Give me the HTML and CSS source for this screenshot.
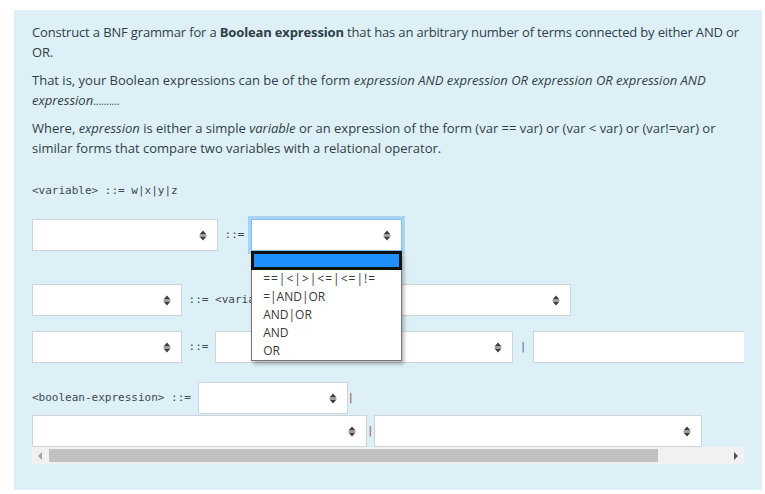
FILE: index.html
```html
<!DOCTYPE html>
<html>
<head>
<meta charset="utf-8">
<link rel="stylesheet" href="styles.css">
</head>
<body>
<div class="page">
  <div class="qtext">
    <p class="lead">Construct a BNF grammar for a <b>Boolean expression</b> that has an arbitrary number of terms connected by either AND or OR.</p>
    <p>That is, your Boolean expressions can be of the form <i>expression AND expression OR expression OR expression AND expression</i><span class="dots">..........</span></p>
    <p>Where, <i>expression</i> is either a simple <i>variable</i> or an expression of the form (var == var) or (var &lt; var) or (var!=var) or similar forms that compare two variables with a relational operator.</p>

    <div class="grammar">
      <div class="code codeline">&lt;variable&gt; ::= w|x|y|z</div>

      <div class="row r1">
        <span class="sel w186"><select></select><svg class="caret" viewBox="0 0 8 11"><path d="M0.5 4.5L4 0.5L7.5 4.5Z"/><path class="mid" d="M0.5 5.5H7.5"/><path d="M0.5 6.5L4 10.5L7.5 6.5Z"/></svg></span>
        <span class="code"> ::= </span>
        <span class="sel w151 focus"><select></select><svg class="caret" viewBox="0 0 8 11"><path d="M0.5 4.5L4 0.5L7.5 4.5Z"/><path class="mid" d="M0.5 5.5H7.5"/><path d="M0.5 6.5L4 10.5L7.5 6.5Z"/></svg>
          <div class="dropdown">
            <div class="opt selected"></div>
            <div class="opt sym">==|&lt;|&gt;|&lt;=|&lt;=|!=</div>
            <div class="opt">=|AND|OR</div>
            <div class="opt">AND|OR</div>
            <div class="opt">AND</div>
            <div class="opt">OR</div>
          </div>
        </span>
      </div>

      <div class="row r2">
        <span class="sel w150"><select></select><svg class="caret" viewBox="0 0 8 11"><path d="M0.5 4.5L4 0.5L7.5 4.5Z"/><path class="mid" d="M0.5 5.5H7.5"/><path d="M0.5 6.5L4 10.5L7.5 6.5Z"/></svg></span>
        <span class="code"> ::= &lt;variable&gt; </span>
        <span class="sel w283"><select></select><svg class="caret" viewBox="0 0 8 11"><path d="M0.5 4.5L4 0.5L7.5 4.5Z"/><path class="mid" d="M0.5 5.5H7.5"/><path d="M0.5 6.5L4 10.5L7.5 6.5Z"/></svg></span>
      </div>

      <div class="row r3">
        <span class="sel w150"><select></select><svg class="caret" viewBox="0 0 8 11"><path d="M0.5 4.5L4 0.5L7.5 4.5Z"/><path class="mid" d="M0.5 5.5H7.5"/><path d="M0.5 6.5L4 10.5L7.5 6.5Z"/></svg></span>
        <span class="code"> ::= </span>
        <span class="sel w298"><select></select><svg class="caret" viewBox="0 0 8 11"><path d="M0.5 4.5L4 0.5L7.5 4.5Z"/><path class="mid" d="M0.5 5.5H7.5"/><path d="M0.5 6.5L4 10.5L7.5 6.5Z"/></svg></span>
        <span class="code"> <span class="bar">|</span> </span>
        <input class="txt" type="text">
      </div>

      <div class="row r4">
        <span class="code">&lt;boolean-expression&gt; ::= </span>
        <span class="sel w150"><select></select><svg class="caret" viewBox="0 0 8 11"><path d="M0.5 4.5L4 0.5L7.5 4.5Z"/><path class="mid" d="M0.5 5.5H7.5"/><path d="M0.5 6.5L4 10.5L7.5 6.5Z"/></svg></span>
        <span class="code red">|</span>
      </div>

      <div class="row r5">
        <span class="sel w335"><select></select><svg class="caret" viewBox="0 0 8 11"><path d="M0.5 4.5L4 0.5L7.5 4.5Z"/><path class="mid" d="M0.5 5.5H7.5"/><path d="M0.5 6.5L4 10.5L7.5 6.5Z"/></svg></span>
        <span class="code red">|</span>
        <span class="sel w328"><select></select><svg class="caret" viewBox="0 0 8 11"><path d="M0.5 4.5L4 0.5L7.5 4.5Z"/><path class="mid" d="M0.5 5.5H7.5"/><path d="M0.5 6.5L4 10.5L7.5 6.5Z"/></svg></span>
      </div>
    </div>

    <div class="hscroll">
      <span class="sb-btn"><span class="arrow-left"></span></span>
      <span class="sb-thumb"></span>
      <span class="sb-space"></span>
      <span class="sb-btn"><span class="arrow-right"></span></span>
    </div>
  </div>
</div>
</body>
</html>
```
FILE: styles.css
```css
html, body {
  margin: 0;
  padding: 0;
  background: #ffffff;
}

.page {
  padding: 10px 3px 5px 14px;
}

.qtext {
  background: #def0f7;
  color: #2e3f48;
  font-family: "Open Sans", "Noto Sans", sans-serif;
  font-size: 13px;
  line-height: 20px;
  padding: 12px 18px 26px 18px;
}

.qtext p {
  margin: 0 0 7.5px 0;
}

.qtext p.lead {
  letter-spacing: -0.15px;
}

.qtext b {
  font-weight: 700;
}

.dots {
  font-size: 10px;
}

.grammar {
  overflow: hidden;
  padding-top: 17.5px;
}

.code {
  font-family: "DejaVu Sans Mono", "Liberation Mono", monospace;
  font-size: 11px;
  line-height: 16px;
  white-space: pre;
  color: #3a4954;
}

.codeline {
  height: 16px;
}

.row {
  display: flex;
  align-items: center;
  height: 32px;
  width: max-content;
}

.r1 { margin-top: 20px; }
.r2 { margin-top: 33px; }
.r3 { margin-top: 15px; }
.r4 { margin-top: 19px; }
.r5 { margin-top: 1px; }

.sel {
  position: relative;
  display: block;
  flex: none;
  height: 32px;
}

.sel select {
  -webkit-appearance: none;
  appearance: none;
  display: block;
  width: 100%;
  height: 32px;
  margin: 0;
  box-sizing: border-box;
  border: 1px solid #cdd4db;
  border-radius: 0;
  background: #ffffff;
  outline: none;
}

.sel.focus select {
  border-color: #80bdf0;
  box-shadow: 0 0 0 3px #aad3f2;
}

.caret {
  position: absolute;
  right: 11px;
  top: 11px;
  width: 8px;
  height: 11px;
  fill: #3c3c3c;
  pointer-events: none;
}

.caret .mid {
  stroke: #a0a0a0;
  stroke-width: 1;
  fill: none;
}

.w150 { width: 150px; }
.w151 { width: 151px; }
.w186 { width: 186px; }
.w283 { width: 283px; }
.w298 { width: 298px; }
.w335 { width: 335px; }
.w328 { width: 328px; }

.txt {
  flex: none;
  display: block;
  width: 264px;
  height: 32px;
  box-sizing: border-box;
  margin: 0;
  border: 1px solid #cdd4db;
  background: #ffffff;
  outline: none;
}

.red {
  color: #9a4a4a;
}

.bar {
  color: #4a6a8a;
}

.dropdown {
  position: absolute;
  z-index: 5;
  left: 0;
  top: 32px;
  width: 151px;
  box-sizing: border-box;
  background: #ffffff;
  border: 1px solid #767676;
  box-shadow: 2px 3px 4px rgba(0, 0, 0, 0.3);
  font-family: "Open Sans", "Noto Sans", sans-serif;
  font-size: 12px;
  line-height: 18px;
  color: #3a3a3a;
}

.opt {
  height: 18px;
  padding-left: 11px;
  white-space: nowrap;
}

.opt.sym {
  letter-spacing: 1px;
}

.opt.selected {
  box-sizing: border-box;
  background: #1e90ff;
  border: 3px solid #111111;
  margin: -1px -1px 0 -1px;
  height: 19px;
}

.hscroll {
  display: flex;
  align-items: center;
  height: 17px;
  background: #f1f1f1;
}

.sb-btn {
  flex: none;
  width: 16px;
  height: 17px;
  display: flex;
  align-items: center;
  justify-content: center;
}

.arrow-left {
  width: 0;
  height: 0;
  border-top: 4px solid transparent;
  border-bottom: 4px solid transparent;
  border-right: 4px solid #a3a3a3;
}

.arrow-right {
  width: 0;
  height: 0;
  border-top: 4px solid transparent;
  border-bottom: 4px solid transparent;
  border-left: 4px solid #505050;
}

.sb-thumb {
  flex: none;
  width: 609px;
  height: 13px;
  margin-left: 1px;
  background: #c1c1c1;
}

.sb-space {
  flex: 1;
}
```
